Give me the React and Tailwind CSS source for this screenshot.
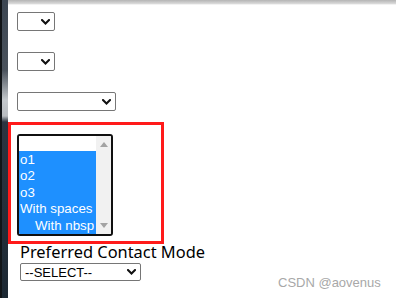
import React from "react";

function Chevron({ className }) {
  return (
    <svg className={className} width="9" height="6" viewBox="0 0 9 6" fill="none">
      <path d="M1 1 L4.5 4.5 L8 1" stroke="#111" strokeWidth="2" strokeLinecap="square" />
    </svg>
  );
}

function Sel({ w, children }) {
  return (
    <div
      className={`h-[19px] ${w} ml-[9px] border border-[#767676] rounded-[2px] bg-white flex items-center justify-between pl-[4px] pr-[4px] text-[13px] leading-none text-black`}
    >
      <span>{children}</span>
      <Chevron />
    </div>
  );
}

export default function App() {
  const rows = [
    { t: "o1", c: "pl-[1px]" },
    { t: "o2", c: "pl-[1px]" },
    { t: "o3", c: "pl-[1px]" },
    { t: "With spaces", c: "pl-[1px]" },
    { t: "With\u00a0nbsp", c: "pl-[16px]" },
  ];
  return (
    <div
      className="relative w-[396px] h-[298px] overflow-hidden bg-white flex"
      style={{ fontFamily: '"Liberation Sans", Arial, sans-serif' }}
    >
      <div className="w-[8px] h-full flex shrink-0">
        <div className="w-[2px] h-full bg-[#111417]" />
        <div className="w-[6px] h-full bg-[linear-gradient(to_bottom,#3c4652_0px,#4a525c_70px,#c4c8cc_100px,#b8bcc0_116px,#2b3440_122px,#26303b_200px,#1c2833_298px)]" />
      </div>
      <div className="flex-1 flex flex-col">
        <div className="h-[5px] bg-[linear-gradient(to_bottom,#b4b4b4,#d8d8d8_70%,#ffffff)]" />
        <div className="mt-[7px]">
          <Sel w="w-[38px]" />
        </div>
        <div className="mt-[21px]">
          <Sel w="w-[38px]" />
        </div>
        <div className="mt-[21px]">
          <Sel w="w-[99px]" />
        </div>
        <div className="mt-[11px] w-[156px] h-[122px] border-[3px] border-[#ff1a1a] pt-[9px] pl-[6px]">
          <div className="w-[96px] h-[102px] border-2 border-[#101010] rounded-[3px] flex overflow-hidden bg-white">
            <div className="flex-1 flex flex-col overflow-hidden text-[13.3px] leading-none">
              <div className="h-[15px] shrink-0 bg-white" />
              {rows.map((r) => (
                <div
                  key={r.t}
                  className={`h-[16.6px] shrink-0 bg-[#1e90ff] text-white flex items-center whitespace-pre ${r.c}`}
                >
                  {r.t}
                </div>
              ))}
            </div>
            <div className="w-[15px] bg-[#f1f1f1] flex flex-col items-center justify-between py-[6px]">
              <svg width="8" height="5" viewBox="0 0 8 5">
                <path d="M0 5 L4 0 L8 5 Z" fill="#a3a3a3" />
              </svg>
              <svg width="8" height="5" viewBox="0 0 8 5">
                <path d="M0 0 L4 5 L8 0 Z" fill="#a3a3a3" />
              </svg>
            </div>
          </div>
        </div>
        <div
          className="ml-[12px] mt-[-2px] text-[16.4px] leading-[20px] text-black"
          style={{ fontFamily: '"Noto Sans", "Open Sans", sans-serif' }}
        >
          Preferred Contact Mode
        </div>
        <div className="mt-[1px] ml-[12px] w-[121px] h-[18px] border border-[#767676] rounded-[2px] flex items-center justify-between pl-[4px] pr-[4px] text-[13px] leading-none text-black">
          <span>--SELECT--</span>
          <Chevron />
        </div>
      </div>
      <div className="absolute left-[278px] top-[275px] text-[13px] leading-[16px] text-[#a8a8a8]">
        CSDN @aovenus
      </div>
    </div>
  );
}
